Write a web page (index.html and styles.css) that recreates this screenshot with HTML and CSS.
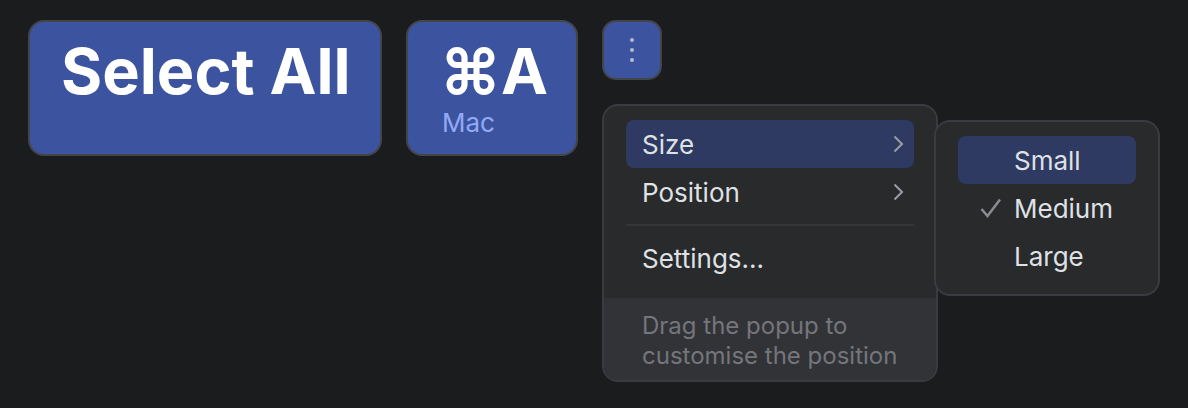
FILE: index.html
```html
<!DOCTYPE html>
<html lang="en">
<head>
<meta charset="utf-8">
<title>Key promoter</title>
<link rel="stylesheet" href="styles.css">
</head>
<body>
<main class="bar">
  <div class="key key-action"><span class="key-label">Select All</span></div>
  <div class="key key-shortcut">
    <span class="key-label">⌘A</span>
    <span class="key-sub">Mac</span>
  </div>
  <div class="more-wrap">
    <button class="more" aria-label="More">
      <svg width="4" height="24" viewBox="0 0 4 24"><circle cx="2" cy="2" r="2"/><circle cx="2" cy="12" r="2"/><circle cx="2" cy="22" r="2"/></svg>
    </button>
    <div class="menu">
      <div class="menu-body">
        <div class="item item-active"><span>Size</span>
          <svg class="chev" width="11" height="18" viewBox="0 0 11 18"><path d="M1.500 1.500 9 9l-7.500 7.500"/></svg>
        </div>
        <div class="item"><span>Position</span>
          <svg class="chev" width="11" height="18" viewBox="0 0 11 18"><path d="M1.500 1.500 9 9l-7.500 7.500"/></svg>
        </div>
        <div class="sep"></div>
        <div class="item"><span>Settings...</span></div>
      </div>
      <div class="menu-foot">Drag the popup to<br>customise the position</div>
    </div>
    <div class="submenu">
      <div class="item sub-item item-active"><span class="tick"></span><span>Small</span></div>
      <div class="item sub-item"><span class="tick">
        <svg width="22" height="20" viewBox="0 0 22 20"><path d="M1.500 11 7.500 18 20 1.500"/></svg>
      </span><span>Medium</span></div>
      <div class="item sub-item"><span class="tick"></span><span>Large</span></div>
    </div>
  </div>
</main>
</body>
</html>
```
FILE: styles.css
```css
* { box-sizing: border-box; }
html, body { margin: 0; height: 100%; }
body {
  background: #1b1c1e;
  font-family: Inter, "Noto Sans", sans-serif;
  color: #dfe1e5;
  overflow: hidden;
}
.bar {
  display: flex;
  align-items: flex-start;
  gap: 24px;
  padding: 20px 28px;
}
.key {
  height: 136px;
  background: #3c54a0;
  border: 2px solid #43454a;
  border-radius: 16px;
  color: #fff;
  display: flex;
  flex-direction: column;
  padding: 11px 30px 0 31px;
}
.key-action { width: 354px; }
.key-shortcut { width: 172px; padding-left: 34px; }
.key-label {
  font-size: 63px;
  font-weight: 700;
  line-height: 76px;
  white-space: nowrap;
}
.key-shortcut .key-label { margin-left: -2px; }
.key-sub {
  font-size: 26px;
  line-height: 28px;
  color: #93a9f5;
}
.more-wrap { position: relative; }
.more {
  width: 60px;
  height: 60px;
  padding: 0;
  display: flex;
  align-items: center;
  justify-content: center;
  background: #3c54a0;
  border: 2px solid #43454a;
  border-radius: 14px;
}
.more svg { fill: #b4bacf; }
.menu {
  position: absolute;
  left: 0;
  top: 84px;
  width: 336px;
  height: 278px;
  background: #292a2c;
  border: 2px solid #393b40;
  border-radius: 16px;
  display: flex;
  flex-direction: column;
  overflow: hidden;
}
.menu-body {
  flex: 1;
  padding: 14px 22px 0;
}
.item {
  height: 48px;
  padding: 0 10px 0 16px;
  border-radius: 8px;
  display: flex;
  align-items: center;
  justify-content: space-between;
  font-size: 26px;
  color: #dfe1e5;
}
.item-active { background: #2e3a62; }
.chev { fill: none; stroke: #9a9da3; stroke-width: 2; }
.sep {
  height: 2px;
  margin: 8px 0 8px;
  background: #353639;
}
.menu-foot {
  height: 82px;
  padding: 13px 38px 0;
  background: #323337;
  font-size: 24px;
  line-height: 30px;
  color: #74767c;
  white-space: nowrap;
}
.submenu {
  position: absolute;
  left: 332px;
  top: 100px;
  width: 226px;
  height: 176px;
  padding: 14px 22px;
  background: #292a2c;
  border: 2px solid #393b40;
  border-radius: 16px;
}
.sub-item { justify-content: flex-start; padding: 0; }
.tick {
  width: 56px;
  display: flex;
  justify-content: flex-end;
  padding-right: 12px;
}
.tick svg { fill: none; stroke: #8a8c91; stroke-width: 2.500; }
```
